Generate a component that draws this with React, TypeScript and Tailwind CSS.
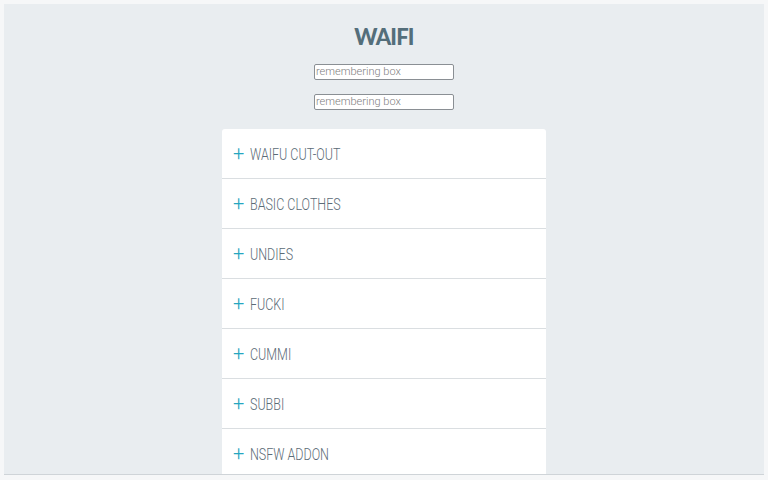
import React from "react";

const items = ["WAIFU CUT-OUT", "BASIC CLOTHES", "UNDIES", "FUCKI", "CUMMI", "SUBBI", "NSFW ADDON"];

export default function App() {
  return (
    <div className="w-[768px] h-[480px] bg-[#f6f7f8] pt-[4px] px-[4px]">
      <div className="h-[471px] overflow-hidden bg-[#e9edf0] border-b border-[#cfd4d8] flex flex-col items-center">
        <h1 className="mt-[18px] text-[22px] leading-[30px] font-black text-[#546e7a] tracking-[-0.8px] font-['Lato',sans-serif]">
          WAIFI
        </h1>
        <input
          defaultValue="remembering box"
          className="mt-[12px] w-[140px] h-[16px] bg-white border border-[#8a8f94] rounded-[2px] px-[1px] text-[11px] font-light text-[#808080] outline-none font-['Roboto',sans-serif]"
        />
        <input
          defaultValue="remembering box"
          className="mt-[14px] w-[140px] h-[16px] bg-white border border-[#8a8f94] rounded-[2px] px-[1px] text-[11px] font-light text-[#808080] outline-none font-['Roboto',sans-serif]"
        />
        <div className="mt-[19px] w-[324px] bg-white rounded-t-[3px] flex flex-col">
          {items.map((it) => (
            <div key={it} className="h-[50px] shrink-0 flex items-center pl-[11px] pt-[2px] border-b border-[#dadee1]">
              <span className="text-[#26a6bf] text-[20px] font-light leading-none w-[17px] -mt-[3px] font-['Roboto',sans-serif]">+</span>
              <span className="text-[16px] font-light text-[#5b6b76] inline-block origin-left scale-x-[0.78] whitespace-nowrap font-['Roboto',sans-serif]">
                {it}
              </span>
            </div>
          ))}
        </div>
      </div>
    </div>
  );
}
